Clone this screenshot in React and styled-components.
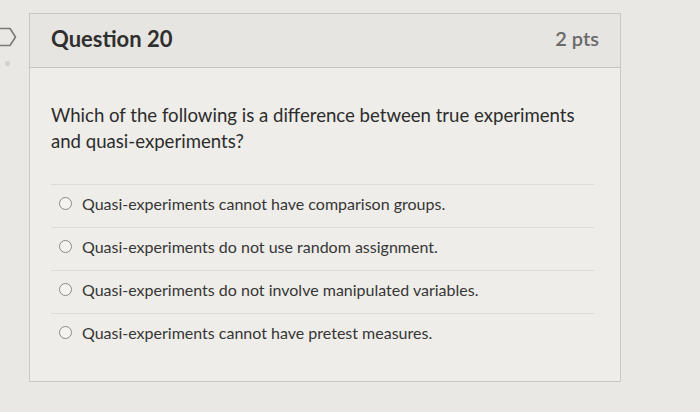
import React from "react";
import styled, { createGlobalStyle } from "styled-components";

const GlobalStyle = createGlobalStyle`
  html, body {
    margin: 0;
    padding: 0;
    background: #e9e8e4;
    font-family: Lato, "Open Sans", sans-serif;
  }
`;

const answers = [
  "Quasi-experiments cannot have comparison groups.",
  "Quasi-experiments do not use random assignment.",
  "Quasi-experiments do not involve manipulated variables.",
  "Quasi-experiments cannot have pretest measures.",
];

const App = () => {
  return (
    <PageStyled>
      <GlobalStyle />
      <aside className="rail">
        <svg width="18" height="20" viewBox="0 0 18 20">
          <path
            d="M-4 1.5 H10 L15.5 10 L10 18.5 H-4"
            fill="none"
            stroke="#7a7a7a"
            strokeWidth="1.6"
            strokeLinejoin="round"
          />
        </svg>
        <span className="dot" />
      </aside>
      <CardStyled>
        <header className="head">
          <h2>Question 20</h2>
          <span className="pts">2 pts</span>
        </header>
        <div className="body">
          <p className="prompt">
            Which of the following is a difference between true experiments
            and quasi-experiments?
          </p>
          <ul className="answers">
            {answers.map((a) => (
              <li key={a}>
                <span className="radio" />
                {a}
              </li>
            ))}
          </ul>
        </div>
      </CardStyled>
    </PageStyled>
  );
};

const PageStyled = styled.div`
  display: flex;
  width: 700px;
  height: 412px;
  overflow: hidden;
  .rail {
    width: 29px;
    flex-shrink: 0;
    display: flex;
    flex-direction: column;
    padding-top: 27px;
    svg {
      display: block;
    }
    .dot {
      width: 5px;
      height: 5px;
      border-radius: 50%;
      background: #d2d1cd;
      margin: 14px 0 0 5px;
    }
  }
`;

const CardStyled = styled.section`
  width: 592px;
  height: 369px;
  margin-top: 13px;
  border: 1px solid #c9c8c4;
  background: #eeede9;
  box-sizing: border-box;
  .head {
    height: 54px;
    box-sizing: border-box;
    display: flex;
    align-items: center;
    justify-content: space-between;
    padding: 0 21px 5px 21px;
    background: #e6e5e1;
    border-bottom: 1px solid #c4c3bf;
    h2 {
      margin: 0;
      font-size: 22px;
      font-weight: 700;
      color: #2f2f2f;
    }
    .pts {
      font-size: 20px;
      font-weight: 600;
      color: #6a6a6a;
    }
  }
  .body {
    padding: 34px 26px 0 21px;
  }
  .prompt {
    margin: 0 0 30px;
    font-size: 18.6px;
    line-height: 26px;
    color: #2c2c2c;
  }
  .answers {
    list-style: none;
    margin: 0;
    padding: 0;
    li {
      height: 43px;
      display: flex;
      align-items: center;
      gap: 10px;
      padding: 0 0 5px 8px;
      box-sizing: border-box;
      border-top: 1px solid #dcdbd7;
      font-size: 16px;
      color: #363636;
    }
    .radio {
      width: 11px;
      height: 11px;
      border-radius: 50%;
      border: 1.5px solid #8a8a8a;
      background: #f4f3f0;
    }
  }
`;

export default App;
